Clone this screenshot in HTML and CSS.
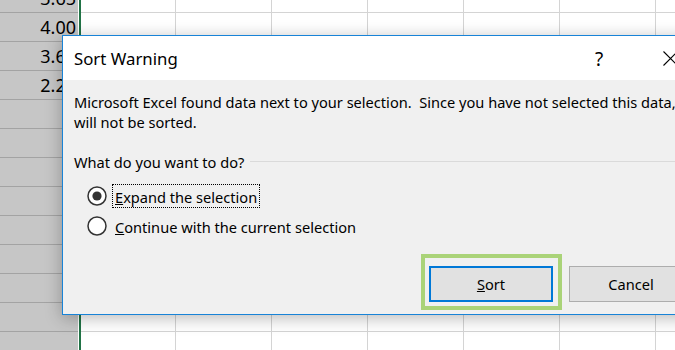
FILE: index.html
```html
<!DOCTYPE html>
<html>
    <head>
        <link rel="stylesheet" href="styles.css">
    </head>
    <body>
        <div class="sheet">
            <div class="col-a">
                <div class="cell-a">3.65</div>
                <div class="cell-a">4.00</div>
                <div class="cell-a">3.67</div>
                <div class="cell-a">2.25</div>
                <div class="cell-a"></div>
                <div class="cell-a"></div>
                <div class="cell-a"></div>
                <div class="cell-a"></div>
                <div class="cell-a"></div>
                <div class="cell-a"></div>
                <div class="cell-a"></div>
                <div class="cell-a"></div>
                <div class="cell-a"></div>
            </div>
            <div class="sel-edge"></div>
            <div class="cells"></div>
        </div>

        <div class="dialog">
            <div class="titlebar">
                <span class="title">Sort Warning</span>
                <span class="help">?</span>
                <span class="close">
                    <svg width="15" height="15" viewBox="0 0 15 15">
                        <path d="M0.5 0.5 L14.5 14.5 M14.5 0.5 L0.5 14.5" stroke="#000" stroke-width="1.1" fill="none"/>
                    </svg>
                </span>
            </div>
            <div class="content">
                <p class="msg">
                    <span class="line">Microsoft Excel found data next to your selection.&nbsp; Since you have not selected this data, it</span>
                    <span class="line">will not be sorted.</span>
                </p>
                <div class="question">
                    <span>What do you want to do?</span>
                    <span class="rule"></span>
                </div>
                <div class="options">
                    <div class="option">
                        <svg class="radio" width="20" height="20" viewBox="0 0 20 20">
                            <circle cx="10" cy="10" r="9" fill="#fff" stroke="#333" stroke-width="1.5"/>
                            <circle cx="10" cy="10" r="4.6" fill="#333"/>
                        </svg>
                        <span class="label focused"><u>E</u>xpand the selection</span>
                    </div>
                    <div class="option">
                        <svg class="radio" width="20" height="20" viewBox="0 0 20 20">
                            <circle cx="10" cy="10" r="9" fill="#fff" stroke="#333" stroke-width="1.5"/>
                        </svg>
                        <span class="label"><u>C</u>ontinue with the current selection</span>
                    </div>
                </div>
                <div class="buttons">
                    <span class="highlight">
                        <button class="btn default"><u>S</u>ort</button>
                    </span>
                    <button class="btn cancel">Cancel</button>
                </div>
            </div>
        </div>
    </body>
</html>
```

FILE: styles.css
```css
* {
    margin: 0;
    padding: 0;
    box-sizing: border-box;
}

html, body {
    width: 675px;
    height: 350px;
    overflow: hidden;
}

body {
    position: relative;
    background-color: #fff;
    font-family: "Noto Sans", "Open Sans", sans-serif;
    color: #000;
}

/* spreadsheet behind the dialog */
.sheet {
    display: flex;
    margin-top: -16px;
    height: 380px;
}

.col-a {
    width: 79px;
    display: flex;
    flex-direction: column;
    background-color: #c6c6c6;
    border-right: 1px solid #fff;
}

.cell-a {
    height: 29px;
    flex: none;
    border-bottom: 1px solid #a3a3a3;
    text-align: right;
    padding-right: 2px;
    font-size: 18px;
    line-height: 29px;
    overflow: hidden;
}

.sel-edge {
    width: 2px;
    background-color: #217346;
}

.cells {
    flex: 1;
    background-image:
        linear-gradient(to right, transparent 95px, #d4d4d4 95px),
        linear-gradient(to bottom, transparent 28px, #d4d4d4 28px);
    background-size: 96px 100%, 100% 29px;
    background-position: -1px 0, 0 0;
}

/* dialog */
.dialog {
    position: absolute;
    left: 62px;
    top: 35px;
    width: 644px;
    height: 280px;
    border: 1px solid #1883d7;
    background-color: #f0f0f0;
    box-shadow: 0 3px 16px rgba(0, 0, 0, 0.28);
    display: flex;
    flex-direction: column;
}

.titlebar {
    height: 44px;
    background-color: #fff;
    display: flex;
    align-items: center;
    padding: 1px 12px 0 11px;
}

.title {
    flex: 1;
    font-size: 16.8px;
}

.help {
    width: 40px;
    margin-right: 28px;
    text-align: center;
    font-size: 19px;
}

.close {
    width: 46px;
    height: 15px;
    display: flex;
    justify-content: center;
    padding-left: 1px;
}

.content {
    flex: 1;
    padding: 12px 12px 0 11px;
    font-size: 14.6px;
    line-height: 20px;
}

.msg .line {
    display: block;
    white-space: nowrap;
}

.question {
    display: flex;
    margin-top: 20px;
    height: 20px;
}

.rule {
    flex: 1;
    height: 1px;
    margin: 9px -12px 0 6px;
    background-color: #dadada;
}

.options {
    margin-top: 12px;
}

.option {
    display: flex;
    align-items: flex-start;
    height: 30px;
}

.radio {
    margin: 2px 0 0 13px;
    flex: none;
}

.label {
    margin-left: 5px;
    padding: 2px 2px 0 2px;
    border: 1px solid transparent;
    height: 24px;
}

.label.focused {
    border: 1px dotted #000;
}

.buttons {
    display: flex;
    justify-content: flex-end;
    align-items: flex-start;
    margin-top: 10px;
}

.highlight {
    display: flex;
    border: 4px solid #aad378;
    padding: 8px 5px 4px 4px;
}

.btn {
    width: 124px;
    height: 36px;
    background-color: #e1e1e1;
    font-family: "Noto Sans", "Open Sans", sans-serif;
    font-size: 14.6px;
    color: #000;
    line-height: 20px;
}

.btn.default {
    border: 2px solid #0078d7;
}

.btn.cancel {
    border: 1px solid #adadad;
    margin: 12px 0 0 7px;
}
```
